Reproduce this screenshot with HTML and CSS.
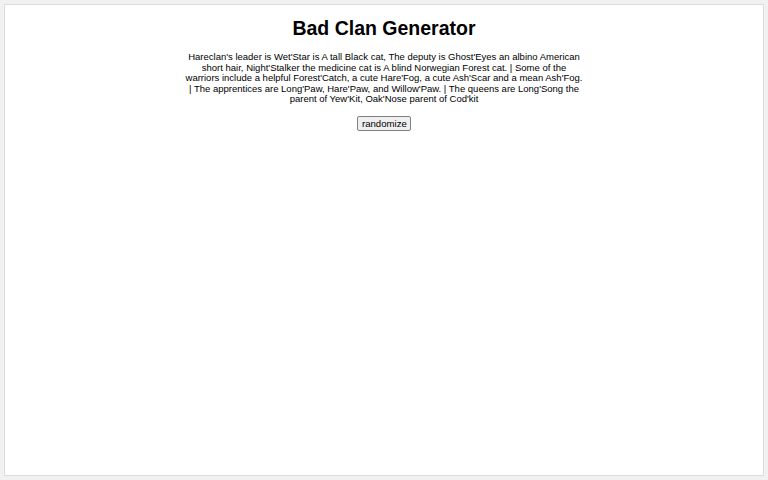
FILE: index.html
```html
<!DOCTYPE html>
<html>
<head>
<meta charset="utf-8">
<title>Bad Clan Generator</title>
<link rel="stylesheet" href="styles.css">
</head>
<body>
<div class="frame">
  <h1 class="title">Bad Clan Generator</h1>
  <p class="story">Hareclan's leader is Wet'Star is A tall Black cat, The deputy is Ghost'Eyes an albino American short hair, Night'Stalker the medicine cat is A blind Norwegian Forest cat. | Some of the warriors include a helpful Forest'Catch, a cute Hare'Fog, a cute Ash'Scar and a mean Ash'Fog. | The apprentices are Long'Paw, Hare'Paw, and Willow'Paw. | The queens are Long'Song the parent of Yew'Kit, Oak'Nose parent of Cod'kit</p>
  <div class="actions"><button class="btn" type="button">randomize</button></div>
</div>
</body>
</html>
```
FILE: styles.css
```css
html, body {
  margin: 0;
  padding: 0;
}
body {
  background: #f1f1f1;
  padding: 4px 4px 4px 4px;
  height: 480px;
  box-sizing: border-box;
  font-family: "Liberation Sans", Arial, sans-serif;
  color: #000;
}
.frame {
  background: #fff;
  border: 1px solid #dcdcdc;
  height: 472px;
  box-sizing: border-box;
  display: flex;
  flex-direction: column;
  align-items: center;
}
.title {
  font-size: 19.5px;
  font-weight: bold;
  line-height: 22.4px;
  margin: 11.7px 0 0 0;
  text-align: center;
}
.story {
  width: 400px;
  margin: 13.4px 0 0 0;
  font-size: 9.5px;
  line-height: 10.5px;
  text-align: center;
}
.actions {
  margin-top: 11px;
  display: flex;
}
.btn {
  font-family: "Liberation Sans", Arial, sans-serif;
  font-size: 9.6px;
  line-height: 11px;
  padding: 1px 4px;
  border: 1px solid #808080;
  border-radius: 2px;
  background: #efefef;
  color: #000;
  width: 54px;
  height: 15px;
  box-sizing: border-box;
}
```
